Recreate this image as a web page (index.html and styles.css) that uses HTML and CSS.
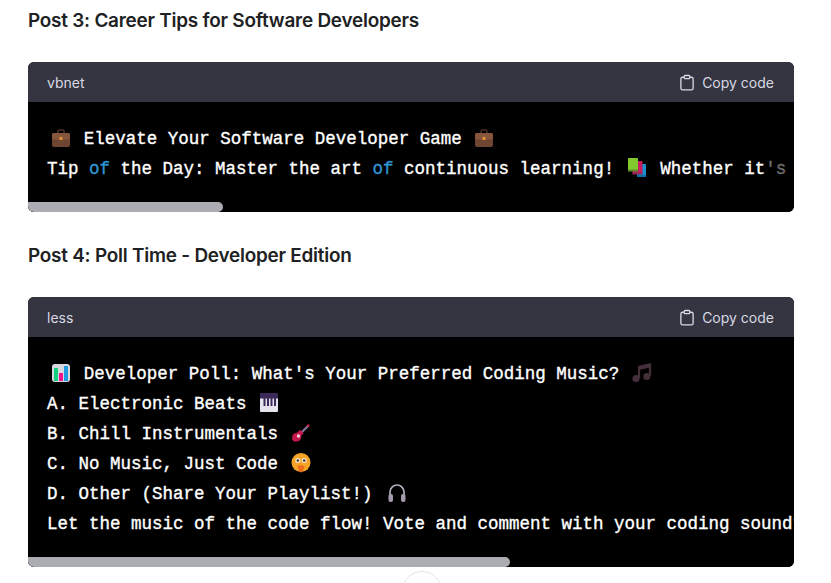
FILE: index.html
```html
<!DOCTYPE html>
<html lang="en">
<head>
<meta charset="utf-8">
<title>Posts</title>
<link rel="stylesheet" href="styles.css">
</head>
<body>
<svg class="defs" width="0" height="0" aria-hidden="true">
  <defs>
    <symbol id="briefcase" viewBox="0 0 20 20">
      <path d="M7 5V3.500C7 2.600 7.700 2 8.500 2h3c.8 0 1.500.6 1.500 1.500V5" fill="none" stroke="#4a3026" stroke-width="1.500"/>
      <rect x="1" y="5" width="18" height="14" rx="2" fill="#6f4431"/>
      <rect x="1" y="5" width="18" height="6.500" rx="2" fill="#87553c"/>
      <rect x="8.500" y="9" width="3" height="3" rx=".6" fill="#e0913a"/>
    </symbol>
    <symbol id="books" viewBox="0 0 20 20">
      <rect x="10" y="6" width="9" height="13" rx="1" fill="#1c8fd0"/>
      <rect x="10" y="17" width="9" height="2" fill="#0f6ea8"/>
      <rect x="5.500" y="3" width="10" height="13" rx="1" fill="#c81d5e"/>
      <rect x="5.500" y="14.500" width="10" height="2" fill="#8c2a50"/>
      <rect x="1" y="0" width="10" height="13" rx="1" fill="#82c92f"/>
      <rect x="1" y="11.500" width="10" height="2" fill="#5a8f25"/>
    </symbol>
    <symbol id="chart" viewBox="0 0 20 20">
      <rect x="1" y="1" width="18" height="18" rx="3" fill="#d7d7df"/>
      <rect x="3" y="5" width="4" height="13" fill="#12cf7f"/>
      <rect x="8" y="10" width="4" height="8" fill="#f0158a"/>
      <rect x="13" y="3" width="4" height="15" fill="#1e9be0"/>
    </symbol>
    <symbol id="note" viewBox="0 0 20 20">
      <path d="M7 15V4l11-2.500V13" fill="none" stroke="#44303a" stroke-width="2.200"/>
      <path d="M7 4l11-2.500v3L7 7z" fill="#44303a"/>
      <circle cx="4" cy="15.500" r="3.500" fill="#44303a"/>
      <circle cx="14.800" cy="13.500" r="3.500" fill="#44303a"/>
    </symbol>
    <symbol id="piano" viewBox="0 0 20 20">
      <rect x="1" y="0" width="18" height="19" rx="1" fill="#e6e3ec"/>
      <rect x="1" y="0" width="18" height="5.500" fill="#3b2a58"/>
      <path d="M4.500 5h2v8h-2zM8 5h2v8H8zM11.500 5h2v8h-2zM15 5h2v8h-2z" fill="#3b2a58"/>
    </symbol>
    <symbol id="guitar" viewBox="0 0 20 20">
      <path d="M9 11L17 3" stroke="#8a7a9a" stroke-width="2.200"/>
      <path d="M15.500 2.500l2-1.500 1.500 1.500-1.500 2z" fill="#c81d4e"/>
      <path d="M9 7c1 .3 3 2.300 3.500 3.500-.5 1-1.500 1-2 1.500-.3 1.500 0 3.500-1.500 5-1.500 1.700-5.500 2.200-7 .7-1.500-1.500-1.200-5.200.5-6.700 1.300-1.200 2.700-1.200 4-1.500.7-.5 1.300-2 2.500-2.500z" fill="#c4174b"/>
      <circle cx="7.500" cy="13" r="1.700" fill="#f3d3dc"/>
    </symbol>
    <symbol id="face" viewBox="0 0 20 20">
      <circle cx="10" cy="9.500" r="9.500" fill="#f7a325"/>
      <circle cx="6.800" cy="7.500" r="2.500" fill="#f4e8dc"/>
      <circle cx="13.200" cy="7.500" r="2.500" fill="#f4e8dc"/>
      <circle cx="6.800" cy="7.500" r="1.200" fill="#4a3020"/>
      <circle cx="13.200" cy="7.500" r="1.200" fill="#4a3020"/>
      <path d="M6.500 13c2-1 5-1 7 0-.5 2.500-2 6.500-3.500 6.500S7 15.500 6.500 13z" fill="#ef6c1d"/>
    </symbol>
    <symbol id="headphones" viewBox="0 0 20 20">
      <path d="M3 12V9a7 7 0 0 1 14 0v3" fill="none" stroke="#b3acbd" stroke-width="1.700"/>
      <rect x="1.500" y="11" width="4.500" height="8" rx="2" fill="#a49cae"/>
      <rect x="14" y="11" width="4.500" height="8" rx="2" fill="#a49cae"/>
    </symbol>
    <symbol id="clipboard" viewBox="0 0 16 18">
      <path d="M4.500 3H3a2 2 0 0 0-2 2v10.500a2 2 0 0 0 2 2h10a2 2 0 0 0 2-2V5a2 2 0 0 0-2-2h-1.500" fill="none" stroke="currentColor" stroke-width="1.500"/>
      <rect x="4.800" y="1" width="6.400" height="3.600" rx="1" fill="none" stroke="currentColor" stroke-width="1.500"/>
    </symbol>
  </defs>
</svg>

<main class="page">
  <h3 class="post-title">Post 3: Career Tips for Software Developers</h3>
  <section class="block">
    <header class="block-head">
      <span class="lang">vbnet</span>
      <span class="copy"><svg class="copy-icon"><use href="#clipboard"/></svg>Copy code</span>
    </header>
    <pre class="code"><span class="emoji emoji-lead"><svg><use href="#briefcase"/></svg></span> Elevate Your Software Developer Game <span class="emoji"><svg><use href="#briefcase"/></svg></span>
Tip <span class="kw">of</span> the Day: Master the art <span class="kw">of</span> continuous learning! <span class="emoji emoji-narrow"><svg><use href="#books"/></svg></span> Whether it<span class="str">'s</span></pre>
    <div class="track"><div class="thumb" style="width:195px"></div></div>
  </section>

  <h3 class="post-title">Post 4: Poll Time - Developer Edition</h3>
  <section class="block">
    <header class="block-head">
      <span class="lang">less</span>
      <span class="copy"><svg class="copy-icon"><use href="#clipboard"/></svg>Copy code</span>
    </header>
    <pre class="code"><span class="emoji emoji-lead"><svg><use href="#chart"/></svg></span> Developer Poll: What's Your Preferred Coding Music? <span class="emoji"><svg><use href="#note"/></svg></span>
A. Electronic Beats <span class="emoji"><svg><use href="#piano"/></svg></span>
B. Chill Instrumentals <span class="emoji"><svg><use href="#guitar"/></svg></span>
C. No Music, Just Code <span class="emoji"><svg><use href="#face"/></svg></span>
D. Other (Share Your Playlist!) <span class="emoji emoji-lead"><svg><use href="#headphones"/></svg></span>
Let the music of the code flow! Vote and comment with your coding soundtrack!</pre>
    <div class="track"><div class="thumb" style="width:482px"></div></div>
  </section>
</main>
<div class="scroll-down"></div>
</body>
</html>
```

FILE: styles.css
```css
* { box-sizing: border-box; }
html, body { height: 100%; }
body {
  margin: 0;
  background: #fff;
  overflow: hidden;
  position: relative;
  font-family: Inter, "Liberation Sans", sans-serif;
}
.defs { position: absolute; }
.page {
  width: 766px;
  margin-left: 28px;
  display: flex;
  flex-direction: column;
}
.post-title {
  margin: 0;
  height: 62px;
  padding-top: 7px;
  font-size: 18.900px;
  line-height: 28px;
  font-weight: 600;
  letter-spacing: -0.22px;
  color: #202123;
}
.block + .post-title { height: 85px; padding-top: 30px; }
.block {
  border-radius: 6px;
  overflow: hidden;
  background: #000;
}
.block-head {
  height: 40px;
  background: #343541;
  padding: 0 20px 0 19px;
  display: flex;
  align-items: center;
  justify-content: space-between;
  font-size: 14px;
  color: #d9d9e3;
}
.copy {
  display: flex;
  align-items: center;
  gap: 8px;
}
.copy-icon {
  width: 14px;
  height: 17px;
  color: #d9d9e3;
}
.code {
  margin: 0;
  padding: 22px 0 18px 19px;
  overflow: hidden;
  font-family: "Liberation Mono", "DejaVu Sans Mono", monospace;
  font-size: 17.500px;
  line-height: 30px;
  font-weight: 400;
  -webkit-text-stroke: 0.35px currentColor;
  color: #fff;
  white-space: pre;
}
.kw { color: #2e95d3; }
.str { color: #6e6e6e; }
.emoji {
  display: inline-block;
  width: 26.250px;
  height: 20px;
  padding-left: 2px;
  vertical-align: -4px;
}
.emoji-lead { padding-left: 4px; }
.emoji-narrow { width: 25px; }
.emoji svg {
  display: block;
  width: 20px;
  height: 20px;
}
.track {
  height: 10px;
  background: #000;
}
.thumb {
  height: 10px;
  background: #acacb3;
  border-radius: 0 5px 5px 5px;
}
.scroll-down {
  position: absolute;
  left: 402px;
  top: 571px;
  width: 40px;
  height: 40px;
  border-radius: 50%;
  background: #fff;
  border: 1px solid #e2e2e6;
}
```
